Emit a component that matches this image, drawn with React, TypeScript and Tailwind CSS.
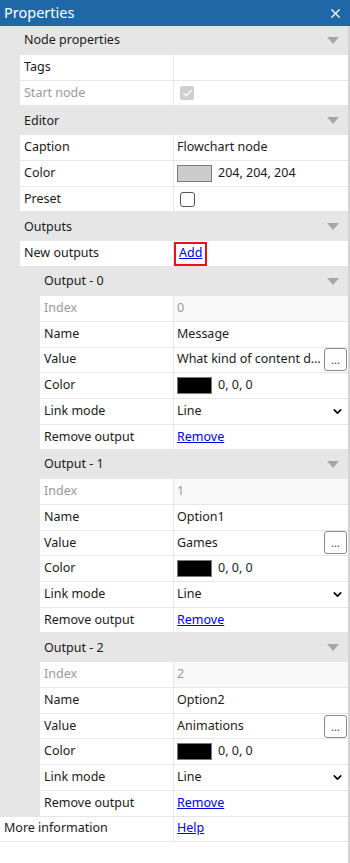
import * as React from 'react'
import { X, ChevronDown, Check } from 'lucide-react'

const font = { fontFamily: '"Noto Sans", "Open Sans", sans-serif' }

type RowProps = {
  label: string
  indent: 0 | 1 | 2
  disabled?: boolean
  children?: React.ReactNode
  shade?: boolean
}

const labelWidth = {
  0: 'w-[174px] pl-1',
  1: 'w-[154px] pl-1',
  2: 'w-[134px] pl-1',
}

const Row = ({ label, indent, disabled, children, shade }: RowProps) => (
  <div className="flex h-[25.7px] bg-white border-b border-[#e6e6e6]">
    <div
      className={`${labelWidth[indent]} flex items-center border-r border-[#e6e6e6] ${
        disabled ? 'text-[#9a9a9a]' : 'text-[#1a1a1a]'
      }`}
    >
      {label}
    </div>
    <div
      className={`flex-1 min-w-0 flex items-center pl-[3px] ${
        shade ? 'bg-[#f9f9f9]' : ''
      } ${disabled ? 'text-[#9a9a9a]' : 'text-[#1a1a1a]'}`}
    >
      {children}
    </div>
  </div>
)

const Header = ({ title }: { title: string }) => (
  <div className="flex h-[29px] items-center justify-between pl-1 pr-[9px] bg-[#e6e6e6] text-[#1a1a1a]">
    <span>{title}</span>
    <svg width="12" height="7" viewBox="0 0 12 7">
      <polygon points="0,0 12,0 6,7" fill="#a6a6a6" />
    </svg>
  </div>
)

const Swatch = ({ color, text }: { color: string; text: string }) => (
  <div className="flex items-center gap-[6px]">
    <span className={`block w-[35px] h-[17px] border border-[#7a7a7a] ${color}`} />
    <span>{text}</span>
  </div>
)

const LinkText = ({ children }: { children: React.ReactNode }) => (
  <a href="#" className="text-[#0000ee] underline">
    {children}
  </a>
)

const outputs = [
  { index: '0', name: 'Message', value: 'What kind of content do you like?' },
  { index: '1', name: 'Option1', value: 'Games' },
  { index: '2', name: 'Option2', value: 'Animations' },
]

const OutputGroup = ({ o }: { o: (typeof outputs)[number] }) => (
  <div>
    <Header title={`Output - ${o.index}`} />
    <Row label="Index" indent={2} disabled shade>
      {o.index}
    </Row>
    <Row label="Name" indent={2}>
      {o.name}
    </Row>
    <Row label="Value" indent={2}>
      <span className="flex-1 min-w-0 truncate">{o.value}</span>
      <button className="ml-[3px] mr-[1px] shrink-0 w-[23px] h-[23px] rounded-[3px] border border-[#8a8a8a] bg-[#fdfdfd] text-[11px] leading-none flex items-end justify-center pb-[5px] text-[#333]">
        ...
      </button>
    </Row>
    <Row label="Color" indent={2}>
      <Swatch color="bg-black" text="0, 0, 0" />
    </Row>
    <Row label="Link mode" indent={2}>
      <span className="flex-1">Line</span>
      <ChevronDown size={13} strokeWidth={3} className="mr-[4px] text-black" />
    </Row>
    <Row label="Remove output" indent={2}>
      <LinkText>Remove</LinkText>
    </Row>
  </div>
)

export default function App() {
  return (
    <div className="w-[350px] min-h-[863px] bg-white text-[12.5px] flex flex-col" style={font}>
      <div className="h-[26px] bg-[#1f68a8] flex items-center justify-between pl-[4px] pr-[7px] text-white">
        <span className="text-[14.5px]">Properties</span>
        <X size={15} strokeWidth={2} />
      </div>
      <div className="flex-1 border-r-2 border-[#d4d4d4]">
        <div className="pl-5 bg-[#e6e6e6]">
          <Header title="Node properties" />
          <Row label="Tags" indent={1} />
          <Row label="Start node" indent={1} disabled>
            <span className="ml-[3px] w-[14px] h-[14px] rounded-[2px] bg-[#cfcfcf] flex items-center justify-center">
              <Check size={11} strokeWidth={3} className="text-white" />
            </span>
          </Row>
          <Header title="Editor" />
          <Row label="Caption" indent={1}>
            Flowchart node
          </Row>
          <Row label="Color" indent={1}>
            <Swatch color="bg-[#cccccc]" text="204, 204, 204" />
          </Row>
          <Row label="Preset" indent={1}>
            <span className="ml-[3px] w-[15px] h-[15px] rounded-[3px] border border-[#555] bg-white" />
          </Row>
          <Header title="Outputs" />
          <Row label="New outputs" indent={1}>
            <span className="-ml-[3px] h-[24px] px-[3px] border-2 border-[#e81123] flex items-center">
              <LinkText>Add</LinkText>
            </span>
          </Row>
          <div className="pl-5 bg-[#e6e6e6]">
            {outputs.map((o) => (
              <OutputGroup key={o.index} o={o} />
            ))}
          </div>
        </div>
        <Row label="More information" indent={0}>
          <LinkText>Help</LinkText>
        </Row>
      </div>
    </div>
  )
}
